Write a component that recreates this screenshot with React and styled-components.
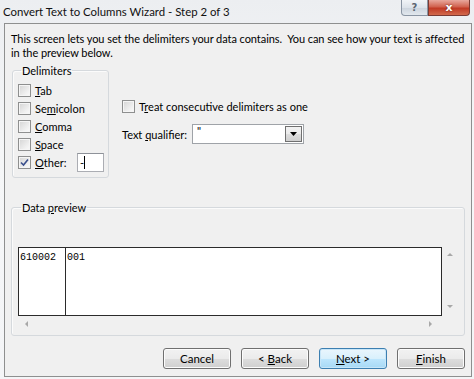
import styled, { createGlobalStyle } from "styled-components";

const GlobalStyle = createGlobalStyle`
  html, body {
    margin: 0;
    padding: 0;
    background: #f4f5f7;
  }
  body {
    font-family: Lato, "Open Sans", sans-serif;
    font-size: 11px;
    color: #000;
  }
`;

const Window = styled.div`
  width: 474px;
  height: 379px;
  overflow: hidden;
  background: linear-gradient(180deg, #eceef1 0%, #f6f7f8 40%, #f4f5f7 100%);
`;

const TitleBar = styled.div`
  height: 23px;
  display: flex;
  justify-content: space-between;
  align-items: flex-start;
  padding-left: 3px;
  padding-right: 4px;
`;

const Title = styled.div`
  font-size: 11.4px;
  line-height: 23px;
  color: #111;
`;

const Caption = styled.div`
  display: flex;
`;

const CaptionButton = styled.div`
  width: ${(p) => p.$w}px;
  height: 16px;
  box-sizing: border-box;
  display: flex;
  align-items: center;
  justify-content: center;
  border: 1px solid ${(p) => (p.$close ? "#7a3a33" : "#8a95a3")};
  border-top: none;
  border-radius: ${(p) => (p.$close ? "0 0 4px 0" : "0 0 0 4px")};
  background: ${(p) =>
    p.$close
      ? "linear-gradient(180deg, #e8a89d 0%, #d1624f 45%, #c13a25 55%, #d26a4d 100%)"
      : "linear-gradient(180deg, #f1f4f7 0%, #dde3ea 50%, #cdd5de 55%, #e2e8ee 100%)"};
  color: ${(p) => (p.$close ? "#fff" : "#5c6672")};
  font-family: "DejaVu Sans", sans-serif;
  font-weight: bold;
  font-size: ${(p) => (p.$close ? "11px" : "10px")};
  text-shadow: ${(p) => (p.$close ? "0 0 2px #5a1a10" : "none")};
`;

const Frame = styled.div`
  margin-left: 4px;
  width: 468px;
  box-sizing: border-box;
  border: 1px solid #8e8f8f;
  background: #f0f0f0;
  padding: 8px 6px 7px 6px;
`;

const Intro = styled.p`
  margin: 0;
  line-height: 13.5px;
  font-size: 11px;
  letter-spacing: -0.06px;
`;

const OptionsRow = styled.div`
  display: flex;
  align-items: flex-start;
  margin-top: 4px;
`;

const Group = styled.fieldset`
  margin: 0 0 0 ${(p) => p.$ml || 0}px;
  width: ${(p) => (p.$w ? `${p.$w}px` : "auto")};
  height: ${(p) => p.$h}px;
  box-sizing: border-box;
  border: 1px solid #d5d9dd;
  border-radius: 3px;
  box-shadow: inset 1px 1px 0 #fbfbfb;
  padding: ${(p) => p.$pad};
  min-width: 0;
`;

const Legend = styled.legend`
  padding: 0 1px;
  margin-left: 3px;
  font-size: 11px;
  line-height: 15px;
`;

const CheckRow = styled.label`
  display: flex;
  align-items: center;
  height: 18px;
  font-size: 11px;
  white-space: nowrap;
`;

const Box = styled.span`
  width: 13px;
  height: 13px;
  box-sizing: border-box;
  border: 1px solid #8e8f8f;
  background: linear-gradient(135deg, #d4d4d4 0%, #f1f1f1 70%, #fafafa 100%);
  box-shadow: inset 0 0 0 1px #f5f5f5;
  margin-right: 4px;
  display: flex;
  align-items: center;
  justify-content: center;
  flex: none;
`;

const Key = styled.span`
  text-decoration: underline;
  text-underline-offset: 1px;
`;

const SmallInput = styled.div`
  margin-left: auto;
  margin-right: 4px;
  width: 27px;
  height: 19px;
  box-sizing: border-box;
  border: 1px solid #abadb3;
  border-top-color: #8e9299;
  background: #fff;
  display: flex;
  align-items: center;
  padding-left: 2px;
  font-size: 11px;
`;

const Caret = styled.span`
  width: 1px;
  height: 13px;
  background: #000;
`;

const RightColumn = styled.div`
  margin-left: 13px;
  padding-top: 34px;
  display: flex;
  flex-direction: column;
  gap: 9px;
`;

const QualifierRow = styled.div`
  display: flex;
  align-items: center;
  height: 20px;
  font-size: 11px;
  white-space: nowrap;
`;

const QualifierLabel = styled.span`
  width: 70px;
`;

const Select = styled.div`
  width: 112px;
  height: 20px;
  box-sizing: border-box;
  border: 1px solid #9fa3a8;
  background: #fff;
  display: flex;
  justify-content: space-between;
  padding: 1px;
  font-size: 11px;
  line-height: 10px;
`;

const SelectValue = styled.span`
  padding-left: 3px;
`;

const DropButton = styled.div`
  width: 17px;
  box-sizing: border-box;
  border: 1px solid #707070;
  background: linear-gradient(180deg, #f2f2f2 0%, #ebebeb 50%, #dddddd 51%, #cfcfcf 100%);
  display: flex;
  align-items: center;
  justify-content: center;
`;

const PreviewGrid = styled.div`
  display: grid;
  grid-template-columns: 424px 16px;
  grid-template-rows: 69px 15px;
`;

const PreviewBox = styled.div`
  border: 1px solid #2b2b2b;
  background: #fff;
  display: flex;
  font-family: "Liberation Mono", "Courier New", monospace;
  font-size: 10px;
`;

const PreviewCol = styled.div`
  width: ${(p) => (p.$w ? `${p.$w}px` : "auto")};
  flex: ${(p) => (p.$w ? "none" : "1")};
  border-right: ${(p) => (p.$w ? "1px solid #2b2b2b" : "none")};
  padding: 4px 0 0 1px;
  line-height: 12px;
`;

const ScrollV = styled.div`
  display: flex;
  flex-direction: column;
  justify-content: space-between;
  align-items: center;
  padding: 5px 0 6px;
`;

const ScrollH = styled.div`
  display: flex;
  justify-content: space-between;
  align-items: center;
  padding: 0 8px 0 6px;
`;

const ButtonRow = styled.div`
  display: flex;
  justify-content: flex-end;
  gap: 10px;
  margin-top: 12px;
`;

const Button = styled.button`
  width: 68px;
  height: 21px;
  box-sizing: border-box;
  padding: 0;
  border: 1px solid ${(p) => (p.$focus ? "#3c7fb1" : "#707070")};
  border-radius: 3px;
  background: ${(p) =>
    p.$focus
      ? "linear-gradient(180deg, #eaf6fd 0%, #d9f0fc 50%, #bee6fd 51%, #a7d9f5 100%)"
      : "linear-gradient(180deg, #f2f2f2 0%, #ebebeb 50%, #dddddd 51%, #cfcfcf 100%)"};
  box-shadow: inset 0 0 0 1px ${(p) => (p.$focus ? "#c8e6f8" : "#fcfcfc")};
  font-family: Lato, "Open Sans", sans-serif;
  font-size: 11.5px;
  color: #000;
`;

function Check({ checked }) {
  return (
    <Box>
      {checked && (
        <svg width="9" height="9" viewBox="0 0 9 9">
          <path d="M1 4.5 L3.5 7 L8 1.5" fill="none" stroke="#3a4f8c" strokeWidth="1.6" />
        </svg>
      )}
    </Box>
  );
}

function Arrow({ dir }) {
  const paths = {
    up: "M0 4 L3 1 L6 4 Z",
    down: "M0 1 L3 4 L6 1 Z",
    left: "M4 0 L1 3 L4 6 Z",
    right: "M1 0 L4 3 L1 6 Z",
  };
  return (
    <svg width="6" height="6" viewBox="0 0 6 6">
      <path d={paths[dir]} fill="#a8a8a8" />
    </svg>
  );
}

const delimiters = [
  { pre: "", key: "T", post: "ab" },
  { pre: "Se", key: "m", post: "icolon" },
  { pre: "", key: "C", post: "omma" },
  { pre: "", key: "S", post: "pace" },
];

export default function App() {
  return (
    <>
      <GlobalStyle />
      <Window>
        <TitleBar>
          <Title>Convert Text to Columns Wizard - Step 2 of 3</Title>
          <Caption>
            <CaptionButton $w={27}>?</CaptionButton>
            <CaptionButton $w={42} $close>
              x
            </CaptionButton>
          </Caption>
        </TitleBar>
        <Frame>
          <Intro>
            This screen lets you set the delimiters your data contains.&nbsp; You can see how your text is affected
            in the preview below.
          </Intro>
          <OptionsRow>
            <Group $ml={1} $w={97} $h={115} $pad="3px 0 0 5px">
              <Legend>Delimiters</Legend>
              {delimiters.map((d) => (
                <CheckRow key={d.post}>
                  <Check />
                  <span>
                    {d.pre}
                    <Key>{d.key}</Key>
                    {d.post}
                  </span>
                </CheckRow>
              ))}
              <CheckRow>
                <Check checked />
                <span>
                  <Key>O</Key>ther:
                </span>
                <SmallInput>
                  -<Caret />
                </SmallInput>
              </CheckRow>
            </Group>
            <RightColumn>
              <CheckRow>
                <Check />
                <span>
                  T<Key>r</Key>eat consecutive delimiters as one
                </span>
              </CheckRow>
              <QualifierRow>
                <QualifierLabel>
                  Text <Key>q</Key>ualifier:
                </QualifierLabel>
                <Select>
                  <SelectValue>"</SelectValue>
                  <DropButton>
                    <svg width="7" height="4" viewBox="0 0 7 4">
                      <path d="M0 0 L7 0 L3.5 4 Z" fill="#000" />
                    </svg>
                  </DropButton>
                </Select>
              </QualifierRow>
            </RightColumn>
          </OptionsRow>
          <Group $h={136} $pad="32px 4px 3px 6px" style={{ marginTop: 22 }}>
            <Legend>
              Data <Key>p</Key>review
            </Legend>
            <PreviewGrid>
              <PreviewBox>
                <PreviewCol $w={45}>610002</PreviewCol>
                <PreviewCol>001</PreviewCol>
              </PreviewBox>
              <ScrollV>
                <Arrow dir="up" />
                <Arrow dir="down" />
              </ScrollV>
              <ScrollH>
                <Arrow dir="left" />
                <Arrow dir="right" />
              </ScrollH>
            </PreviewGrid>
          </Group>
          <ButtonRow>
            <Button>Cancel</Button>
            <Button>
              &lt; <Key>B</Key>ack
            </Button>
            <Button $focus>
              <Key>N</Key>ext &gt;
            </Button>
            <Button>
              <Key>F</Key>inish
            </Button>
          </ButtonRow>
        </Frame>
      </Window>
    </>
  );
}
